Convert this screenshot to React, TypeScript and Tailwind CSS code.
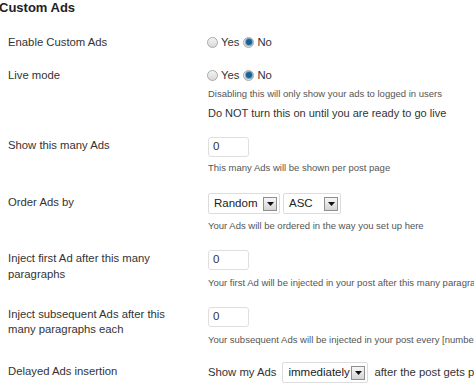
import React from 'react';

const font = { fontFamily: '"Liberation Sans", Arial, sans-serif' };

function Radio({ checked }: { checked?: boolean }) {
  return (
    <span className="inline-flex h-[11px] w-[11px] items-center justify-center rounded-full border border-[#a9a9a9] bg-gradient-to-b from-[#f4f4f4] to-[#d8d8d8]">
      {checked && <span className="h-[6px] w-[6px] rounded-full bg-[#1f5f8f] ring-1 ring-[#6fa7cf]" />}
    </span>
  );
}

function Select({ value, width }: { value: string; width: string }) {
  return (
    <span className={`inline-flex h-[21px] items-center rounded-[2px] border border-[#dcdcdc] bg-white pl-[5px] pr-[2px] ${width}`}>
      <span className="text-[11.5px] text-[#222]">{value}</span>
      <span className="ml-auto flex h-[14px] w-[14px] items-center justify-center border border-[#8f8f8f] bg-gradient-to-b from-[#f7f7f7] to-[#d4d4d4]">
        <svg width="7" height="4" viewBox="0 0 7 4"><path d="M0 0h7L3.5 4z" fill="#111" /></svg>
      </span>
    </span>
  );
}

function NumInput() {
  return (
    <div className="flex h-[20px] w-[41px] items-center rounded-[3px] border border-[#dfdfdf] bg-white pl-[4px] text-[11.5px] text-[#333]">
      0
    </div>
  );
}

function Note({ children }: { children: React.ReactNode }) {
  return <div className="whitespace-nowrap text-[9.5px] leading-[14px] text-[#555]">{children}</div>;
}

export default function App() {
  return (
    <div className="h-[384px] w-[474px] overflow-hidden bg-white text-[11.3px] text-[#333]" style={font}>
      <h2 className="ml-[-1px] text-[13px] font-bold leading-[16px] text-[#222]">Custom Ads</h2>

      <div className="mt-[18px] grid grid-cols-[200px_1fr]">
        <div className="pl-[8px] leading-[16px]">Enable Custom Ads</div>
        <div className="flex items-center gap-[3px] pl-[7px] leading-[16px]">
          <Radio /> <span className="mr-[1px]">Yes</span> <Radio checked /> <span>No</span>
        </div>
      </div>

      <div className="mt-[17px] grid grid-cols-[200px_1fr]">
        <div className="pl-[8px] leading-[16px]">Live mode</div>
        <div className="pl-[7px]">
          <div className="flex items-center gap-[3px] leading-[16px]">
            <Radio /> <span className="mr-[1px]">Yes</span> <Radio checked /> <span>No</span>
          </div>
          <div className="mt-[4px] pl-[1px]"><Note>Disabling this will only show your ads to logged in users</Note></div>
          <div className="mt-[4px] whitespace-nowrap pl-[1px] text-[11px] leading-[16px]">Do NOT turn this on until you are ready to go live</div>
        </div>
      </div>

      <div className="mt-[16px] grid grid-cols-[200px_1fr]">
        <div className="pl-[8px] leading-[16px]">Show this many Ads</div>
        <div className="pl-[8px]">
          <NumInput />
          <div className="mt-[4px]"><Note>This many Ads will be shown per post page</Note></div>
        </div>
      </div>

      <div className="mt-[18px] grid grid-cols-[200px_1fr]">
        <div className="pt-[1px] pl-[8px] leading-[16px]">Order Ads by</div>
        <div className="pl-[8px]">
          <div className="flex gap-[3px]">
            <Select value="Random" width="w-[72px]" />
            <Select value="ASC" width="w-[58px]" />
          </div>
          <div className="mt-[5px]"><Note>Your Ads will be ordered in the way you set up here</Note></div>
        </div>
      </div>

      <div className="mt-[17px] grid grid-cols-[200px_1fr]">
        <div className="pl-[8px] pr-[20px] leading-[16px]">Inject first Ad after this many paragraphs</div>
        <div className="pl-[8px]">
          <NumInput />
          <div className="mt-[6px]"><Note>Your first Ad will be injected in your post after this many paragraphs</Note></div>
        </div>
      </div>

      <div className="mt-[17px] grid grid-cols-[200px_1fr]">
        <div className="pl-[8px] pr-[20px] leading-[15px]">Inject subsequent Ads after this many paragraphs each</div>
        <div className="pl-[8px]">
          <NumInput />
          <div className="mt-[6px]"><Note>Your subsequent Ads will be injected in your post every [number] paragraphs</Note></div>
        </div>
      </div>

      <div className="mt-[15px] grid grid-cols-[200px_1fr]">
        <div className="pt-[1px] pl-[8px] leading-[16px]">Delayed Ads insertion</div>
        <div className="flex items-center gap-[6px] whitespace-nowrap pl-[8px]">
          <span>Show my Ads</span>
          <Select value="immediately" width="w-[86px]" />
          <span>after the post gets published</span>
        </div>
      </div>
    </div>
  );
}
